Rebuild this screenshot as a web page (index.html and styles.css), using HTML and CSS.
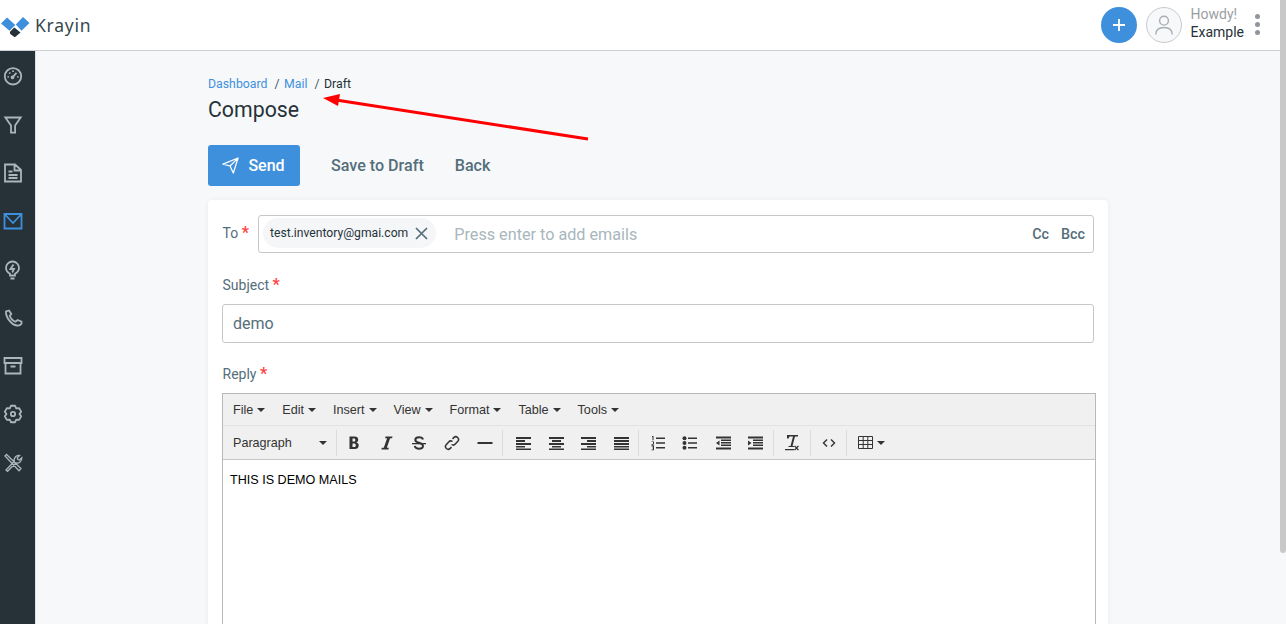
FILE: index.html
```html
<!DOCTYPE html>
<html lang="en">
<head>
<meta charset="utf-8">
<title>Compose</title>
<link rel="stylesheet" href="styles.css">
</head>
<body>
<header class="topbar">
  <div class="brand">
    <svg class="brand-mark" width="30" height="22" viewBox="0 0 30 22"><path d="M1 7.500L7 1.500 15.300 9 9.500 14.800Z" fill="#3e90dc"/><path d="M15.800 8.500L23 1 29.500 7 21.500 14.800Z" fill="#3e90dc"/><path d="M10 15.800L14.300 11.500 20.500 16.500 15.500 20.800Q14.800 21.300 14 20.800L10.300 18Q9.600 17 10 15.800Z" fill="#263238"/></svg>
    <span class="brand-name">Krayin</span>
  </div>
  <div class="top-actions">
    <button class="plus" aria-label="Add"><svg width="14" height="14" viewBox="0 0 14 14"><path d="M7 1v12M1 7h12" stroke="#fff" stroke-width="1.800" fill="none"/></svg></button>
    <div class="avatar"><svg width="22" height="22" viewBox="0 0 22 22" fill="none" stroke="#a8adb2" stroke-width="1.400"><circle cx="11" cy="6.700" r="4.400"/><path d="M2.800 20.500c0-4.800 3.500-7 8.200-7s8.200 2.200 8.200 7"/></svg></div>
    <div class="who"><span class="howdy">Howdy!</span><span class="uname">Example</span></div>
    <div class="dots"><i></i><i></i><i></i></div>
  </div>
</header>
<div class="shell">
  <nav class="side">
    <a class="nav-item"><svg viewBox="0 0 20 20" width="20" height="20"><circle cx="10" cy="9.300" r="8.200"/><path d="M9.500 10.300l4-4.500M4.500 9.800h1.300M6.300 5.600l.9.900M10 3.600v1.300M15.500 9.800h-1.300"/><circle cx="9.500" cy="10.300" r="1"/></svg></a>
    <a class="nav-item"><svg viewBox="0 0 20 20" width="20" height="20"><path d="M2.300 2.500h15.400l-5.600 8v7.200H8v-7.200z"/></svg></a>
    <a class="nav-item"><svg viewBox="0 0 20 20" width="20" height="20"><path d="M2 1.500h10l6 5.500v11.500H2zM11.500 1.500V7.500H18M5.500 8.500h4M5.500 12h9M5.500 15h9"/></svg></a>
    <a class="nav-item active"><svg viewBox="0 0 20 20" width="20" height="20"><path d="M1.500 3h17v14.500h-17zM1.500 3l8.500 9 8.500-9"/></svg></a>
    <a class="nav-item"><svg viewBox="0 0 20 20" width="20" height="20"><path d="M7 15.500v-1.800C4.700 12.300 3 10.400 3 7.900 3 4.300 6 1.500 9.500 1.500s6.500 2.800 6.500 6.400c0 2.500-1.700 4.400-4 5.800v1.800zM7.500 18.500h4M10.500 4.500L7.500 9h3.500l-1.800 3.500"/></svg></a>
    <a class="nav-item"><svg viewBox="0 0 20 20" width="20" height="20"><path d="M6 2.500L3 3.500C2.500 9 8.500 17 14 17.500c1.500.200 3.800-.8 4.500-1.800v-2.200l-4-1.500-2 1.800C10 12.700 7.500 10 6.800 7.700l1.500-1.700z"/></svg></a>
    <a class="nav-item"><svg viewBox="0 0 20 20" width="20" height="20"><path d="M1.500 2h17v5h-17zM2.500 7v10.500h15V7M7.500 10.500h5"/></svg></a>
    <a class="nav-item"><svg viewBox="0 0 20 20" width="20" height="20"><path d="M12.060 1.750L7.940 1.750 6.750 4.370 3.890 4.100 1.830 7.660 3.500 10 1.830 12.340 3.890 15.900 6.750 15.630 7.940 18.250 12.060 18.250 13.250 15.630 16.110 15.900 18.170 12.340 16.500 10 18.170 7.660 16.110 4.100 13.250 4.370Z" stroke-linejoin="round"/><circle cx="10" cy="10" r="2.200"/></svg></a>
    <a class="nav-item"><svg class="thin" viewBox="0 0 20 20" width="20" height="20"><path d="M3 17L11.200 8.500C10.600 5 13 2 16.500 2.500L14.300 4.800 14.800 6.500 16.500 7 18.800 4.800C19 8.500 16 10.800 12.800 10L4.500 18.300zM2 3L3.500 1.500 18 15.500 16 17.700z"/></svg></a>
  </nav>
  <main class="main">
    <div class="col">
      <div class="crumbs"><a>Dashboard</a><span class="sep">/</span><a>Mail</a><span class="sep">/</span><span class="cur">Draft</span></div>
      <h1 class="title">Compose</h1>
      <div class="actions">
        <button class="send"><svg width="17" height="17" viewBox="0 0 18 18" fill="none" stroke="#fff" stroke-width="1.300" stroke-linejoin="round"><path d="M1 7.500L17 1l-5 16-3.500-7.500zM8.500 9.500L17 1"/></svg>Send</button>
        <a class="link">Save to Draft</a>
        <a class="link">Back</a>
      </div>
      <section class="card">
        <div class="to-row">
          <label class="lab to-lab">To <b>*</b></label>
          <div class="to-box">
            <span class="chip">test.inventory@gmai.com<svg width="13" height="13" viewBox="0 0 13 13"><path d="M1 1l11 11M12 1L1 12" stroke="#546e7a" stroke-width="1.700"/></svg></span>
            <span class="ph">Press enter to add emails</span>
            <span class="cc">Cc</span><span class="cc">Bcc</span>
          </div>
        </div>
        <label class="lab subj">Subject <b>*</b></label>
        <div class="input">demo</div>
        <label class="lab reply">Reply <b>*</b></label>
        <div class="editor">
          <div class="menubar">
            <span class="mi">File<i class="car"></i></span><span class="mi">Edit<i class="car"></i></span><span class="mi">Insert<i class="car"></i></span><span class="mi">View<i class="car"></i></span><span class="mi">Format<i class="car"></i></span><span class="mi">Table<i class="car"></i></span><span class="mi">Tools<i class="car"></i></span>
          </div>
          <div class="toolbar">
            <div class="tgroup g-para"><span class="para">Paragraph</span><i class="car"></i></div>
            <div class="tgroup">
              <span class="tb"><svg width="16" height="16" viewBox="0 0 16 16"><path d="M3.500 1.500h5c2.500 0 3.700 1.200 3.700 3.200 0 1.300-.7 2.300-1.800 2.700 1.500.4 2.300 1.500 2.300 3 0 2.300-1.500 3.600-4 3.600H3.500zM6.500 3.500v3h1.500c1 0 1.300-.5 1.300-1.500S9 3.500 8 3.500zM6.500 8.400v3.600h1.800c1.100 0 1.500-.7 1.500-1.800S9.400 8.400 8.300 8.400z" fill="#333" fill-rule="evenodd"/></svg></span>
              <span class="tb"><svg width="16" height="16" viewBox="0 0 16 16"><path d="M6.500 1.500h7l-.4 1.700h-2L7.800 12.800h2L9.400 14.500h-7l.4-1.700h2L8.100 3.200h-2z" fill="#333"/></svg></span>
              <span class="tb"><svg width="16" height="16" viewBox="0 0 16 16"><path d="M1 8h14v1.300H1z" fill="#333"/><path d="M12 4.500C11.600 3 10 2.300 8 2.300 5.800 2.300 4.300 3.400 4.300 5c0 3.500 7.700 2 7.700 6 0 1.600-1.700 2.700-4 2.700-2.200 0-3.800-1-4.300-2.700" fill="none" stroke="#333" stroke-width="2"/></svg></span>
              <span class="tb"><svg width="16" height="16" viewBox="0 0 16 16" fill="none" stroke="#333" stroke-width="1.500"><path d="M7.500 9.500c1.500 1 3 .5 3.800-.5l2.500-2.700c1-1.200.9-2.800-.2-3.800s-2.700-1-3.800.1L8.500 3.900"/><path d="M8.500 6.500c-1.500-1-3-.5-3.800.5L2.200 9.700c-1 1.200-.9 2.800.2 3.800s2.700 1 3.800-.1l1.300-1.300"/></svg></span>
              <span class="tb"><svg width="16" height="16" viewBox="0 0 16 16"><rect x="0.500" y="7" width="15" height="2" fill="#333"/></svg></span>
            </div>
            <div class="tgroup g-a">
              <span class="tb"><svg width="16" height="16" viewBox="0 0 16 16"><path class="ln" d="M1 2h15v2H1zM1 5h9v2H1zM1 8h15v2H1zM1 11h9v1.500H1zM1 13.500h15v1.500H1z"/></svg></span>
              <span class="tb"><svg width="16" height="16" viewBox="0 0 16 16"><path class="ln" d="M1 2h15v2H1zM4 5h9v2H4zM1 8h15v2H1zM4 11h9v1.500H4zM1 13.500h15v1.500H1z"/></svg></span>
              <span class="tb"><svg width="16" height="16" viewBox="0 0 16 16"><path class="ln" d="M1 2h15v2H1zM7 5h9v2H7zM1 8h15v2H1zM7 11h9v1.500H7zM1 13.500h15v1.500H1z"/></svg></span>
              <span class="tb"><svg width="16" height="16" viewBox="0 0 16 16"><path class="ln" d="M1 2h15v2H1zM1 5h15v2H1zM1 8h15v2H1zM1 11h15v1.500H1zM1 13.500h15v1.500H1z"/></svg></span>
            </div>
            <div class="tgroup g-b">
              <span class="tb"><svg width="16" height="16" viewBox="0 0 16 16"><path class="ln" d="M6 2.500h9v1.600H6zM6 7.200h9v1.600H6zM6 12h9v1.600H6zM2 1h1.500v4.200H2.500V2H2zM1.500 6.500h2.500v2.800l-1.500.8H4v.6H1.500v-1.500L3 9V7.100H1.500zM1.500 11h2.500v4.200H1.500v-.6H3V13.300H2v-.6h1v-1.100H1.500z"/></svg></span>
              <span class="tb"><svg width="16" height="16" viewBox="0 0 16 16"><path class="ln" d="M6 2.500h9v1.600H6zM6 7.200h9v1.600H6zM6 12h9v1.600H6z"/><circle cx="2.500" cy="3.300" r="2" fill="#333"/><circle cx="2.500" cy="8" r="2" fill="#333"/><circle cx="2.500" cy="12.800" r="2" fill="#333"/></svg></span>
              <span class="tb"><svg width="16" height="16" viewBox="0 0 16 16"><path class="ln" d="M1 1.500h15v2H1zM6 4.500h10v1.500H6zM6 7h10v1.500H6zM6 9.500h10v1.500H6zM1 12.500h15v2H1zM4.500 5.500v5L1 8z"/></svg></span>
              <span class="tb"><svg width="16" height="16" viewBox="0 0 16 16"><path class="ln" d="M1 1.500h15v2H1zM6 4.500h10v1.500H6zM6 7h10v1.500H6zM6 9.500h10v1.500H6zM1 12.500h15v2H1zM1 5.500v5L4.500 8z"/></svg></span>
            </div>
            <div class="tgroup g-c">
              <span class="tb"><svg width="16" height="16" viewBox="0 0 16 16"><path class="ln" d="M3 0h11v1.500H11L8.500 11H10v1H4.500v-1H6.500L9 1.500H5.500L4.500 3.500H3zM1 14h9v1.300H1zM11 10.500l1.500 1.500 1.500-1.500 1 .8-1.700 1.700 1.700 1.700-1 .8-1.500-1.500-1.500 1.500-1-.8 1.700-1.700-1.700-1.700z"/></svg></span>
            </div>
            <div class="tgroup g-d">
              <span class="tb"><svg width="16" height="16" viewBox="0 0 16 16" fill="none" stroke="#333" stroke-width="1.400"><path d="M6 4.500L2.500 8 6 11.500M10 4.500L13.500 8 10 11.500"/></svg></span>
            </div>
            <div class="tgroup g-last">
              <span class="tb tb-table"><svg width="15" height="13" viewBox="0 0 15 13" fill="none" stroke="#333" stroke-width="1"><path d="M.5.500h14v12H.5zM.5 4.500h14M.5 8.500h14M5.200.5v12M9.800.5v12"/></svg><i class="car"></i></span>
            </div>
          </div>
          <div class="body">THIS IS DEMO MAILS</div>
        </div>
      </section>
    </div>
  </main>
</div>
<div class="scroll-thumb"></div>
<svg class="arrow" width="270" height="50" viewBox="0 0 270 50"><path d="M265 41L13 2" stroke="#f00" stroke-width="3" fill="none"/><path d="M0 0L17 -4 15 8z" fill="#f00"/></svg>
</body>
</html>
```
FILE: styles.css
```css
* { box-sizing: border-box; }
html, body { margin: 0; height: 624px; overflow: hidden; }
body { font-family: Roboto, sans-serif; background: #f7f8fa; color: #263238; position: relative; }
.topbar { height: 51px; background: #fff; border-bottom: 1px solid #cfd2d4; display: flex; justify-content: space-between; align-items: center; padding-right: 26px; }
.brand { display: flex; align-items: center; gap: 5px; }
.brand-mark { margin-top: 3px; display: block; }
.brand-name { font-family: "Noto Sans", sans-serif; font-size: 17.500px; letter-spacing: .75px; color: #37474f; line-height: 24px; }
.top-actions { display: flex; align-items: center; }
.plus { width: 36px; height: 36px; border-radius: 50%; background: #3e90dc; border: 0; padding: 0; display: flex; align-items: center; justify-content: center; }
.avatar { width: 36px; height: 36px; border-radius: 50%; border: 1px solid #c7c9cc; background: #f7f8fa; margin-left: 9px; display: flex; align-items: center; justify-content: center; }
.who { display: flex; flex-direction: column; margin-left: 9px; font-size: 14px; line-height: 18px; padding-bottom: 4px; }
.howdy { color: #9a9ea2; }
.uname { color: #263238; }
.dots { display: flex; flex-direction: column; gap: 3px; margin-left: 11px; padding-bottom: 2px; }
.dots i { width: 5px; height: 5px; border-radius: 50%; background: #8f959a; display: block; }
.shell { display: flex; height: 573px; }
.side { width: 36px; background: #263238; border-right: 1px solid #dfe2e4; padding-top: 15.500px; display: flex; flex-direction: column; gap: 28.250px; flex: none; }
.nav-item { height: 20px; padding-left: 3px; display: block; }
.nav-item svg { display: block; fill: none; stroke: #a9b6bc; stroke-width: 1.800; }
.nav-item svg.thin { stroke-width: 1.300; }
.nav-item.active svg { stroke: #3e90dc; }
.main { flex: 1; padding-left: 172px; }
.col { width: 900px; }
.crumbs { font-size: 12.300px; line-height: 16px; padding-top: 25px; color: #263238; }
.crumbs a { color: #3e90dc; }
.sep { margin: 0 4.500px 0 7px; color: #455a64; }
.cur { color: #263238; }
.title { font-size: 21.300px; font-weight: 400; margin: 3px 0 0; line-height: 30px; color: #263238; }
.actions { display: flex; align-items: center; margin-top: 20px; }
.send { width: 92px; height: 41px; background: #3e90dc; border: 0; border-radius: 3px; color: #fff; font: 500 16px Roboto, sans-serif; display: flex; align-items: center; justify-content: center; gap: 9px; padding: 0 1px 0 0; }
.link { font-size: 16.100px; font-weight: 500; color: #546e7a; margin-left: 31px; }
.card { background: #fff; margin-top: 14px; padding: 15px 14px 0; height: 430px; box-shadow: 0 0 5px rgba(0,0,0,.06); border-radius: 4px 4px 0 0; }
.lab { display: block; font-size: 14px; color: #546e7a; line-height: 18px; padding-left: .500px; }
.lab b { color: #f44; font-weight: 700; font-size: 16px; line-height: 14px; }
.to-row { display: flex; align-items: center; }
.to-lab { width: 36px; flex: none; margin-top: -3px; }
.to-box { flex: 1; height: 38px; border: 1px solid #c7c7c7; border-radius: 3px; display: flex; align-items: center; padding: 0 8px 0 4px; }
.chip { height: 30px; border-radius: 15px; background: #f4f6f8; padding: 0 8px 0 7px; display: flex; align-items: center; gap: 7px; font-size: 12.150px; color: #263238; margin-top: -2px; }
.ph { flex: 1; margin-left: 18px; font-size: 16.200px; color: #a9b6bc; }
.cc { font-size: 14.300px; font-weight: 500; color: #546e7a; margin-left: 12px; }
.subj { margin-top: 23px; }
.input { height: 39px; margin-top: 10px; border: 1px solid #c7c7c7; border-radius: 3px; padding-left: 10px; font-size: 16px; line-height: 37px; color: #546e7a; }
.reply { margin-top: 22px; }
.editor { width: 874px; margin-top: 10px; border: 1px solid #b8b8b8; border-bottom: 0; height: 240px; display: flex; flex-direction: column; }
.menubar { height: 32px; background: #f0f0f0; border-bottom: 1px solid #e2e2e2; display: flex; align-items: center; padding-left: 10px; font: 12.600px/16px "Liberation Sans", sans-serif; color: #333; gap: 17px; }
.mi { display: flex; align-items: center; }
.car { width: 0; height: 0; border: 4px solid transparent; border-top-color: #333; border-bottom: 0; margin-left: 4px; display: block; }
.toolbar { height: 34px; background: #f0f0f0; border-bottom: 1px solid #c5c5c5; display: flex; align-items: center; font: 12.600px/16px "Liberation Sans", sans-serif; color: #333; }
.tgroup { display: flex; align-items: center; height: 26px; border-right: 1px solid #dcdcdc; padding: 0 1px; }
.g-para { width: 114px; padding: 0 9px 0 10px; justify-content: space-between; }
.g-a { padding-left: 4px; padding-right: 1px; }
.g-b { padding-left: 2px; padding-right: 1px; }
.g-c { padding: 0 2px; }
.g-d { padding: 0 1px; }
.g-last { border-right: 0; padding-left: 6.500px; }
.tb { width: 32.600px; height: 26px; display: flex; align-items: center; justify-content: center; }
.tb-table { width: 36px; }
.tb svg { display: block; }
.ln { fill: #333; }
.body { flex: 1; background: #fff; padding: 12px 7px; font: 12.600px/16px "Liberation Sans", sans-serif; color: #000; }
.scroll-thumb { position: absolute; right: 0; top: 0; width: 6px; height: 553px; background: #c8c8c8; border-radius: 0 0 3px 3px; }
.arrow { position: absolute; left: 323px; top: 98px; overflow: visible; }
```
